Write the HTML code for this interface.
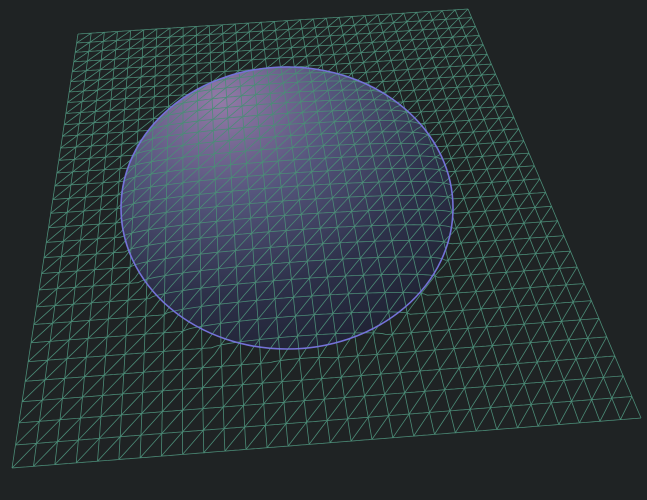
<!DOCTYPE html>
<html><head><meta charset="utf-8"><style>
html,body{margin:0;padding:0;background:#1f2324;width:647px;height:500px;overflow:hidden}
svg{display:block}
</style></head><body>
<svg id="s" width="647" height="500" viewBox="0 0 647 500" xmlns="http://www.w3.org/2000/svg">
<defs>
<radialGradient id="g" cx="0.3" cy="0.15" r="0.95" fx="0.3" fy="0.12">
<stop offset="0" stop-color="#947aa8"/>
<stop offset="0.35" stop-color="#55557c"/>
<stop offset="0.7" stop-color="#2d3049"/>
<stop offset="1" stop-color="#1e2131"/>
</radialGradient>
</defs>
<rect width="647" height="500" fill="#1f2324"/>
<ellipse cx="287" cy="208" rx="166" ry="141" fill="url(#g)"/>
<g id="grid" stroke="#4b8c77" stroke-width="0.8" fill="none"></g>
<ellipse cx="287" cy="208" rx="166" ry="141" fill="none" stroke="#7472d8" stroke-width="1.6"/>
</svg>
<script>
var P=[[78,34],[468,9],[641,418],[12,468]];
var x0=P[0][0],y0=P[0][1],x1=P[1][0],y1=P[1][1],x2=P[2][0],y2=P[2][1],x3=P[3][0],y3=P[3][1];
var dx1=x1-x2,dx2=x3-x2,dy1=y1-y2,dy2=y3-y2,sx=x0-x1+x2-x3,sy=y0-y1+y2-y3;
var den=dx1*dy2-dx2*dy1;
var g=(sx*dy2-dx2*sy)/den,h=(dx1*sy-sx*dy1)/den;
var a=x1-x0+g*x1,b=x3-x0+h*x3,c=x0,d=y1-y0+g*y1,e=y3-y0+h*y3,f=y0;
function m(u,v){var w=g*u+h*v+1;var X=(a*u+b*v+c)/w,Y=(d*u+e*v+f)/w;
 var ex=(X-287)/166,ey=(Y-215)/148,r=ex*ex+ey*ey;
 if(r<1){Y-=10*Math.sqrt(1-r);}
 return [X,Y];}
var N=30,M=30,out="",S=6;
function L(u0,v0,u1,v1){for(var k=0;k<=S;k++){var t=k/S;var p=m(u0+(u1-u0)*t,v0+(v1-v0)*t);out+=(k?"L":"M")+p[0].toFixed(1)+" "+p[1].toFixed(1);}}
for(var i=0;i<=N;i++){for(var j=0;j<M;j++)L(i/N,j/M,i/N,(j+1)/M);}
for(var j=0;j<=M;j++){for(var i=0;i<N;i++)L(i/N,j/M,(i+1)/N,j/M);}
S=3;
for(var i=0;i<N;i++)for(var j=0;j<M;j++){L(i/N,(j+1)/M,(i+1)/N,j/M);}
var p=document.createElementNS("http://www.w3.org/2000/svg","path");
p.setAttribute("d",out);
document.getElementById("grid").appendChild(p);
</script>
</body></html>
